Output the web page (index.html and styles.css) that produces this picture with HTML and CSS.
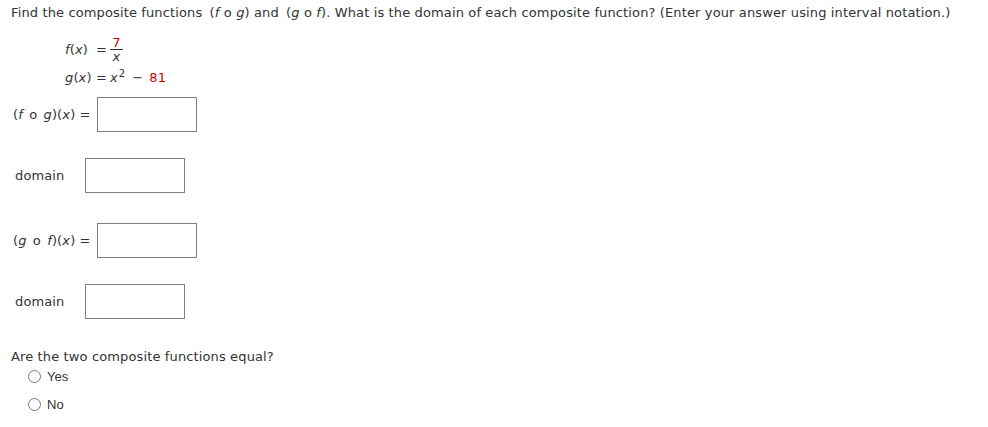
FILE: index.html
```html
<!DOCTYPE html>
<html>
<head>
<meta charset="utf-8">
<link rel="stylesheet" href="styles.css">
</head>
<body>
<div class="q">
  <p class="title">Find the composite functions <span class="m">(<i>f</i> o <i>g</i>)</span> and <span class="m">(<i>g</i> o <i>f</i>)</span>. What is the domain of each composite function? (Enter your answer using interval notation.)</p>
  <div class="defs">
    <div class="def def-f">
      <span class="lhs"><i>f</i>(<i>x</i>)</span>
      <span class="eq">=</span>
      <span class="frac"><span class="num red">7</span><span class="den"><i>x</i></span></span>
    </div>
    <div class="def def-g">
      <span class="lhs"><i>g</i>(<i>x</i>)</span>
      <span class="eq">=</span>
      <span class="rhs"><i>x</i><sup>2</sup><span class="minus">&minus;</span><span class="red">81</span></span>
    </div>
  </div>
  <div class="row row-fog">
    <span class="label wide"><span class="expr">(<i>f</i> o <i>g</i>)(<i>x</i>)</span> =</span>
    <span class="box"></span>
  </div>
  <div class="row row-dom1">
    <span class="label narrow">domain</span>
    <span class="box"></span>
  </div>
  <div class="row row-gof">
    <span class="label wide"><span class="expr">(<i>g</i> o <i>f</i>)(<i>x</i>)</span> =</span>
    <span class="box"></span>
  </div>
  <div class="row row-dom2">
    <span class="label narrow">domain</span>
    <span class="box"></span>
  </div>
  <p class="ask">Are the two composite functions equal?</p>
  <div class="choices">
    <label class="choice choice-yes"><span class="radio"></span><span class="opt">Yes</span></label>
    <label class="choice choice-no"><span class="radio"></span><span class="opt">No</span></label>
  </div>
</div>
</body>
</html>
```

FILE: styles.css
```css
html, body {
  margin: 0;
  padding: 0;
  background: #ffffff;
}
body {
  font-family: "DejaVu Sans", Verdana, sans-serif;
  font-size: 13px;
  letter-spacing: 0.13px;
  color: #333333;
}
.q {
  padding: 5px 0 0 11px;
}
p {
  margin: 0;
}
i {
  font-style: italic;
}
.title {
  line-height: 16px;
  white-space: nowrap;
}
.m {
  margin-left: 3px;
}
.red {
  color: #cc0000;
}
.defs {
  margin: 15px 0 0 54px;
}
.def {
  display: flex;
  align-items: center;
}
.lhs {
  display: block;
  width: 31px;
  flex: none;
}
.eq {
  display: block;
  width: 14px;
  flex: none;
}
.frac {
  display: inline-flex;
  flex-direction: column;
  align-items: center;
  width: 13px;
}
.num {
  line-height: 13px;
  border-bottom: 1px solid #333333;
  width: 100%;
  text-align: center;
}
.den {
  line-height: 13px;
}
.def-g {
  margin-top: 7px;
  line-height: 16px;
}
.rhs sup {
  font-size: 10px;
  line-height: 0;
  vertical-align: 5px;
  margin-left: 1px;
}
.minus {
  margin: 0 6px 0 7px;
}
.row {
  display: flex;
  align-items: center;
}
.label {
  display: block;
  box-sizing: border-box;
  flex: none;
  white-space: nowrap;
}
.label.wide {
  width: 86px;
  padding-left: 2px;
}
.expr {
  word-spacing: 2px;
}
.label.narrow {
  width: 74px;
  padding-left: 4px;
}
.box {
  display: block;
  width: 98px;
  height: 33px;
  border: 1px solid #808080;
  background: #ffffff;
}
.row-fog {
  margin-top: 11px;
}
.row-dom1 {
  margin-top: 26px;
}
.row-gof {
  margin-top: 30px;
}
.row-dom2 {
  margin-top: 26px;
}
.ask {
  margin-top: 30px;
  line-height: 16px;
}
.choices {
  display: flex;
  flex-direction: column;
}
.choice {
  display: flex;
  align-items: center;
  padding-left: 17px;
  height: 16px;
  font-family: "Liberation Sans", Arial, sans-serif;
  font-size: 13px;
  letter-spacing: 0;
  color: #333333;
}
.choice-yes {
  margin-top: 3px;
}
.choice-no {
  margin-top: 12px;
}
.radio {
  display: block;
  box-sizing: border-box;
  width: 13px;
  height: 13px;
  border: 1px solid #7a7a7a;
  border-radius: 50%;
  background: #ffffff;
  margin-right: 6px;
}
```
